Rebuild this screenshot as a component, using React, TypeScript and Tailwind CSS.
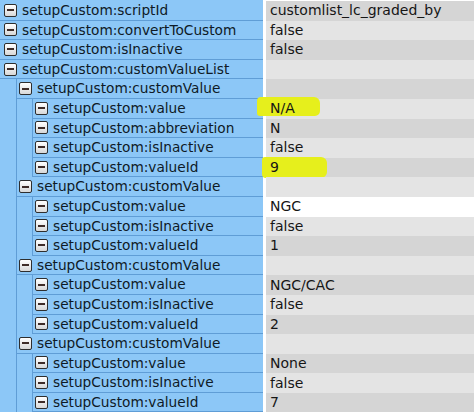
import clsx from "clsx";

type TreeNode = {
  label: string;
  value?: string;
  children?: TreeNode[];
};

const customValue = (value: string, id: string, abbr?: string): TreeNode => ({
  label: "setupCustom:customValue",
  children: [
    { label: "setupCustom:value", value },
    ...(abbr ? [{ label: "setupCustom:abbreviation", value: abbr }] : []),
    { label: "setupCustom:isInactive", value: "false" },
    { label: "setupCustom:valueId", value: id },
  ],
});

const tree: TreeNode[] = [
  { label: "setupCustom:scriptId", value: "customlist_lc_graded_by" },
  { label: "setupCustom:convertToCustom", value: "false" },
  { label: "setupCustom:isInactive", value: "false" },
  {
    label: "setupCustom:customValueList",
    children: [
      customValue("N/A", "9", "N"),
      customValue("NGC", "1"),
      customValue("NGC/CAC", "2"),
      customValue("None", "7"),
    ],
  },
];

// flat list of values in row order, for the right column
const flatten = (nodes: TreeNode[]): string[] =>
  nodes.flatMap((n) => [n.value ?? "", ...(n.children ? flatten(n.children) : [])]);

const values = flatten(tree);

// rows marked with a yellow marker in the picture
const marks: Record<number, string> = {
  5: "left-[-9px] top-[-2px] h-[19px] w-[63px] rounded-[4px_6px_5px_3px]",
  8: "left-[-4px] top-[-1px] h-[21px] w-[65px] rounded-[3px_6px_6px_4px]",
};

const font = { fontFamily: '"DejaVu Sans", Verdana, sans-serif' };

function Toggle() {
  return (
    <span className="flex h-[13px] w-[13px] shrink-0 items-center justify-center rounded-[2px] border-[1.5px] border-[#2e2e2e] bg-gradient-to-b from-white to-[#d8d8d8]">
      <span className="h-[2px] w-[7px] bg-[#3e2c28]" />
    </span>
  );
}

function Node({ node, level }: { node: TreeNode; level: number }) {
  return (
    <div>
      <div
        className={clsx(
          "flex h-[19.6px] items-center gap-[5px] overflow-hidden whitespace-nowrap border-b border-[#5f9dd6] text-[13.7px] text-[#0f1a26]",
          level === 0 ? "pl-[4px]" : "pl-[2px]"
        )}
      >
        <Toggle />
        <span>{node.label}</span>
      </div>
      {node.children && (
        <div className={clsx("border-l border-[#5f9dd6]", level === 0 ? "ml-[16px]" : "ml-[15px]")}>
          {node.children.map((c, i) => (
            <Node key={i} node={c} level={level + 1} />
          ))}
        </div>
      )}
    </div>
  );
}

export default function App() {
  return (
    <div className="flex h-[412px] w-[474px] overflow-hidden bg-white" style={font}>
      <div className="w-[263px] shrink-0 overflow-hidden bg-[#8cc7f7] pt-px">
        {tree.map((n, i) => (
          <Node key={i} node={n} level={0} />
        ))}
      </div>
      <div className="w-[3px] shrink-0 bg-white" />
      <div className="flex-1 pt-px">
        {values.map((v, i) => (
          <div
            key={i}
            className={clsx(
              "relative flex h-[19.6px] items-center whitespace-nowrap pl-[4px] text-[14px] text-[#161616]",
              i === 10 ? "bg-white" : i % 2 === 0 ? "bg-[#d5d5d5]" : "bg-[#e4e4e4]"
            )}
          >
            {marks[i] && <span className={clsx("absolute bg-[#e6ef1c]", marks[i])} />}
            <span className="relative">{v}</span>
          </div>
        ))}
      </div>
    </div>
  );
}
